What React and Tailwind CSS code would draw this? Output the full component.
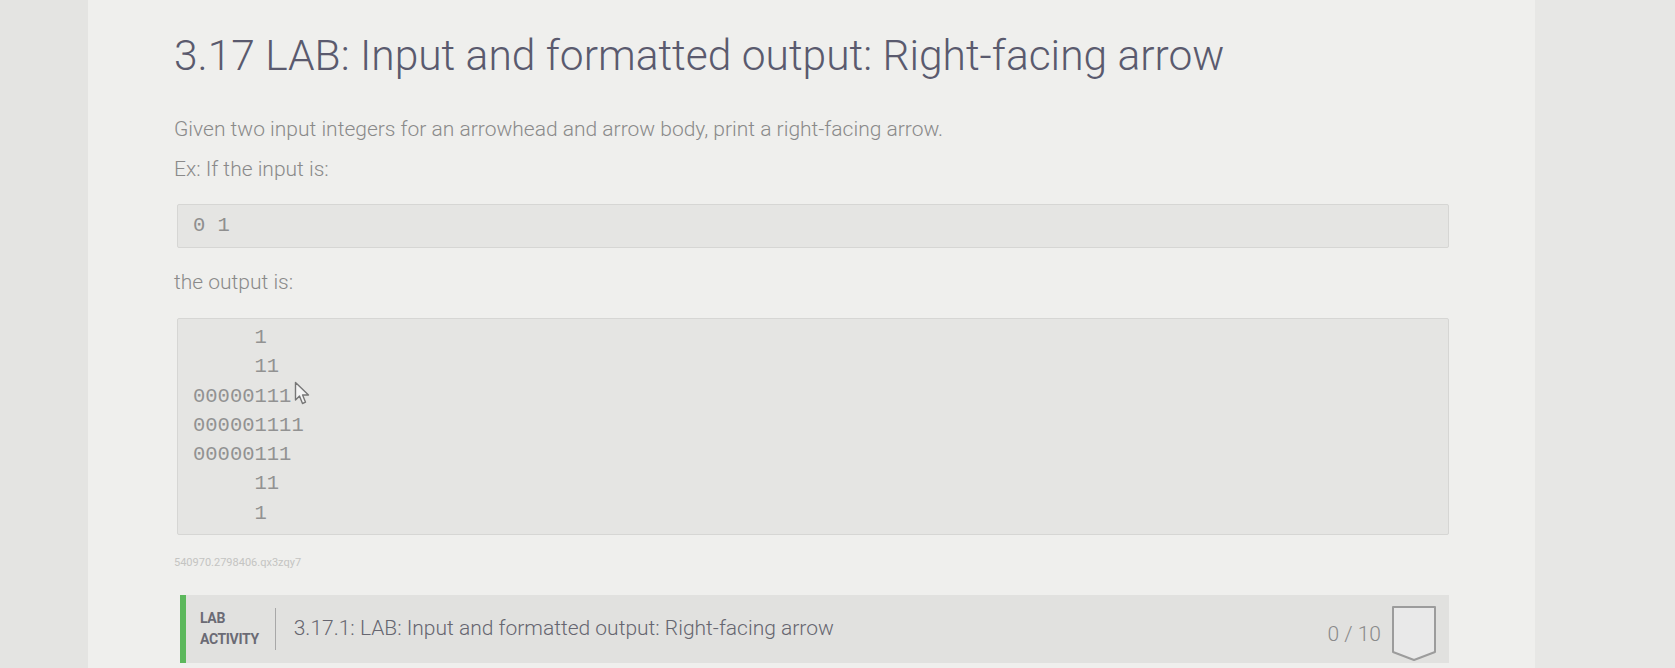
import React from "react";

const lines = ["     1", "     11", "00000111", "000001111", "00000111", "     11", "     1"];

function Cursor() {
  return (
    <svg width="17" height="25" viewBox="0 0 17 25" className="absolute left-[116px] top-[62px]">
      <path d="M1.5 1.5 L1.5 19 L5.5 15 L8.5 22.5 L11.5 21.2 L8.6 14 L14.5 14 Z" fill="#f4f4f4" stroke="#777" strokeWidth="1.4" strokeLinejoin="round" />
    </svg>
  );
}

function Pocket() {
  return (
    <svg width="46" height="58" viewBox="0 0 46 58">
      <path d="M2 2 H44 V47 L23 55 L2 47 Z" fill="#e9e9e9" stroke="#9c9c9c" strokeWidth="2" strokeLinejoin="round" />
    </svg>
  );
}

export default function App() {
  return (
    <div className="flex w-[1675px] h-[668px] overflow-hidden bg-[#efefed]" style={{ fontFamily: "Roboto, 'Liberation Sans', sans-serif" }}>
      <div className="w-[88px] shrink-0 bg-[#e4e4e2]" />
      <div className="w-[1447px] shrink-0 pl-[86px] pr-[86px] pt-[32px]">
        <h1 className="text-[42.5px] leading-[48px] font-light text-[#5a5a6e] whitespace-nowrap">
          3.17 LAB: Input and formatted output: Right-facing arrow
        </h1>
        <p className="mt-[36px] text-[21px] leading-[26px] font-light text-[#8a8a8a] whitespace-nowrap">
          Given two input integers for an arrowhead and arrow body, print a right-facing arrow.
        </p>
        <p className="mt-[14px] text-[21px] leading-[26px] font-light text-[#8a8a8a]">Ex: If the input is:</p>
        <div className="mt-[22px] ml-[3px] h-[44px] flex items-center px-[15px] bg-[#e5e5e3] border border-[#d6d6d4] rounded-[2px]">
          <span className="text-[20.5px] text-[#8f8f8f] whitespace-pre" style={{ fontFamily: "'Liberation Mono', monospace" }}>0 1</span>
        </div>
        <p className="mt-[21px] text-[21px] leading-[26px] font-light text-[#8a8a8a]">the output is:</p>
        <div className="relative mt-[23px] ml-[3px] h-[217px] px-[15px] py-[4px] bg-[#e5e5e3] border border-[#d6d6d4] rounded-[2px]">
          {lines.map((l, i) => (
            <div key={i} className="text-[20.5px] leading-[29.3px] text-[#929292] whitespace-pre" style={{ fontFamily: "'Liberation Mono', monospace" }}>
              {l}
            </div>
          ))}
          <Cursor />
        </div>
        <p className="mt-[21px] text-[11px] leading-[14px] text-[#c4c4c2] whitespace-nowrap">540970.2798406.qx3zqy7</p>
        <div className="mt-[25px] ml-[6px] h-[68px] flex items-center bg-[#e1e1df] border-l-[6px] border-[#5cb85c] pl-[14px] pr-[12px]">
          <div className="flex flex-col text-[14px] leading-[21px] font-bold text-[#6b6b75] tracking-tight">
            <span>LAB</span>
            <span>ACTIVITY</span>
          </div>
          <div className="ml-[16px] w-px h-[42px] bg-[#a8a8a8]" />
          <div className="ml-[18px] flex-1 text-[21px] font-light text-[#666670] whitespace-nowrap">
            3.17.1: LAB: Input and formatted output: Right-facing arrow
          </div>
          <div className="text-[21px] font-light text-[#8a8a8a] mr-[10px] mt-[12px]">0 / 10</div>
          <div className="mt-[10px]">
            <Pocket />
          </div>
        </div>
      </div>
      <div className="flex-1 bg-[#e7e7e5]" />
    </div>
  );
}
